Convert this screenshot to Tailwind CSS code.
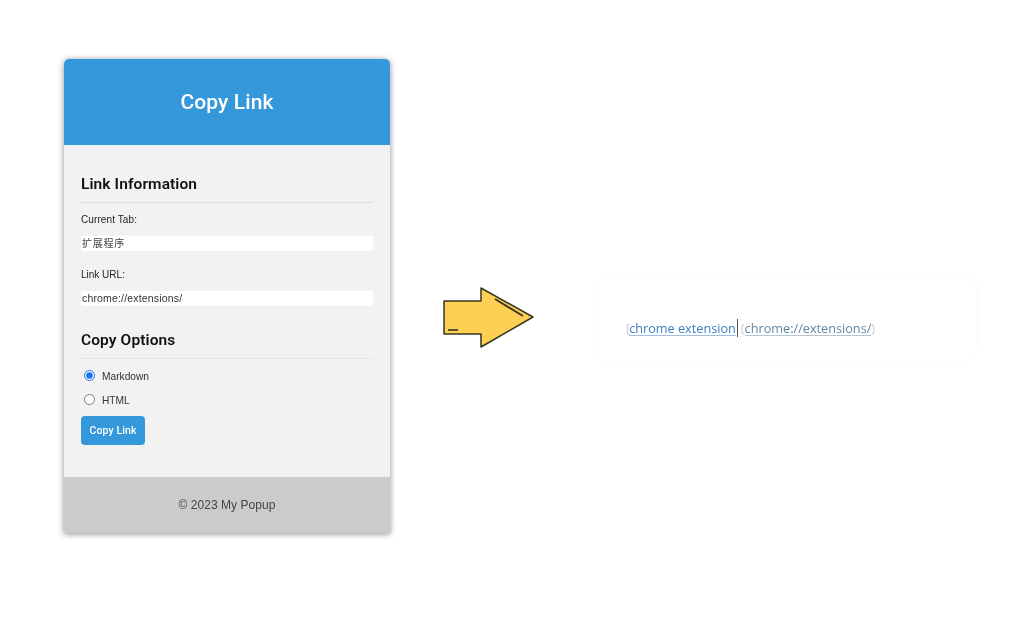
<!DOCTYPE html>
<html lang="en">
<head>
  <meta charset="UTF-8" />
  <title>Copy Link</title>
  <script src="https://cdn.jsdelivr.net/npm/@tailwindcss/browser@4"></script>
</head>
<body class="bg-white h-[638px] w-[1020px] overflow-hidden font-['Liberation_Sans','Noto_Sans_CJK_SC',sans-serif]">
  <div class="flex items-start pl-[64px] pt-[59px] blur-[0.4px]">

    <!-- popup -->
    <div class="w-[326px] h-[474px] flex flex-col rounded-t-[5px] bg-[#f2f2f2] shadow-[0_1px_6px_rgba(0,0,0,0.45)] overflow-hidden shrink-0">
      <div class="h-[86px] bg-[#3498db] flex items-center justify-center pt-[1px]">
        <h1 class="text-[21px] font-medium font-['Roboto',sans-serif] text-white tracking-[0.1px]">Copy Link</h1>
      </div>

      <div class="flex-1 px-[17px] pt-[30px]">
        <h2 class="text-[15.5px] leading-[18px] font-semibold font-['Roboto',sans-serif] text-[#111] tracking-[0.1px]">Link Information</h2>
        <div class="h-[1px] bg-[#dedede] mt-[9px] mb-[11px]"></div>
        <p class="text-[10px] leading-[12px] text-[#222] tracking-[0.1px]">Current Tab:</p>
        <div class="h-[15px] bg-white rounded-[2px] mt-[10px] text-[10px] leading-[15px] text-[#444] pl-[1px] tracking-[0.75px]">扩展程序</div>
        <p class="text-[10px] leading-[12px] text-[#222] mt-[18px]">Link URL:</p>
        <div class="h-[15px] bg-white rounded-[2px] mt-[10px] pl-[1px] text-[10.5px] leading-[15px] text-[#333] tracking-[0.17px]">chrome://extensions/</div>

        <h2 class="text-[15.5px] leading-[18px] font-semibold font-['Roboto',sans-serif] text-[#111] tracking-[0.1px] mt-[25px]">Copy Options</h2>
        <div class="h-[1px] bg-[#e4e4e4] mt-[9px]"></div>
        <label class="flex items-center mt-[10px] h-[13px] pl-[3px]">
          <input type="radio" name="format" checked class="w-[11px] h-[11px] m-0 accent-[#1a73e8]" />
          <span class="ml-[7px] pt-[2px] text-[10.2px] text-[#333]">Markdown</span>
        </label>
        <label class="flex items-center mt-[11px] h-[13px] pl-[3px]">
          <input type="radio" name="format" class="w-[11px] h-[11px] m-0" />
          <span class="ml-[7px] pt-[2px] text-[10.2px] text-[#333]">HTML</span>
        </label>
        <button class="mt-[10px] h-[29px] w-[64px] rounded-[4px] bg-[#3498db] text-white text-[10.5px] font-medium font-['Roboto',sans-serif] tracking-[0.1px]">Copy Link</button>
      </div>

      <div class="h-[56px] bg-[#cbcbcb] flex items-center justify-center text-[12px] text-[#444] tracking-[0.05px]">© 2023 My Popup</div>
    </div>

    <!-- arrow -->
    <svg class="ml-[52px] mt-[227px] shrink-0" width="94" height="64" viewBox="0 0 94 64">
      <path d="M2 15H39V2L91 31L39 61V48H2Z" fill="#fdcf52" stroke="#3a3624" stroke-width="1.5" stroke-linejoin="round" />
      <path d="M53 13L81 30" stroke="#3a3624" stroke-width="2" />
      <path d="M6 44H16" stroke="#5d5330" stroke-width="2" />
    </svg>

    <!-- result note -->
    <div class="ml-[60px] mt-[218px] w-[380px] h-[84px] rounded-[14px] bg-white shadow-[0_0_5px_rgba(0,0,0,0.03)] pl-[30px] pt-[42px] text-[12.7px] leading-[18px] font-['Open_Sans',sans-serif] shrink-0">
      <span class="text-[#ccc] mr-[-1px]">[</span><span class="text-[#3d7fc1] underline underline-offset-2 decoration-[#9dbfe0]">chrome extension</span><span class="border-l border-[#555] ml-[1px]"></span><span class="text-[#ccc] ml-[3px]">(</span><span class="text-[#5d87a5] underline underline-offset-2 decoration-[#b5c6d2]">chrome://extensions/</span><span class="text-[#ccc]">)</span>
    </div>
  </div>
</body>
</html>
